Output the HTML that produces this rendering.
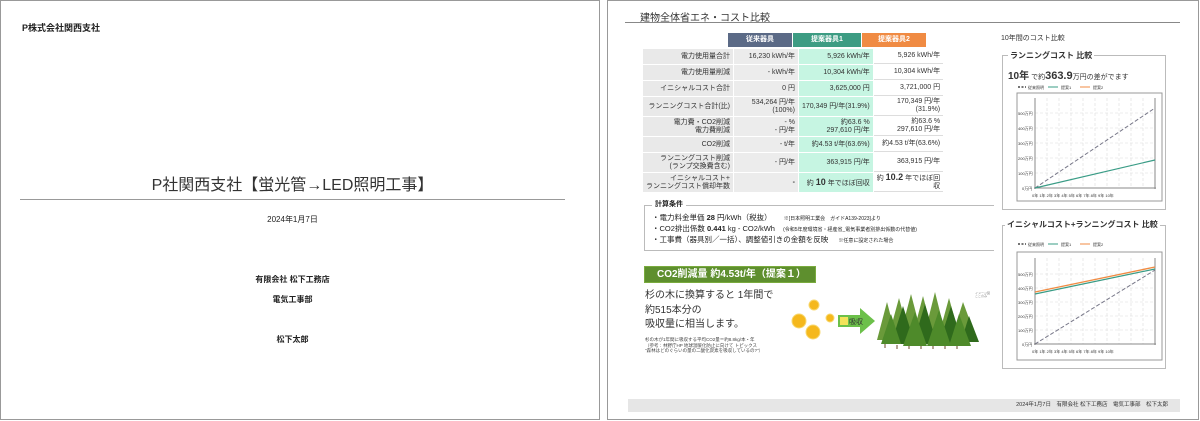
<!DOCTYPE html>
<html><head><meta charset="utf-8"><style>
*{margin:0;padding:0;box-sizing:border-box}
body{width:1200px;height:421px;background:#fff;position:relative;overflow:hidden;font-family:"Liberation Sans","Noto Sans CJK JP",sans-serif;color:#222}
.a{position:absolute;white-space:nowrap}
.c{text-align:center}
table{border-collapse:separate;border-spacing:1px;font-size:7px;color:#333}
td{height:15px;padding:0 3px;text-align:right;line-height:8px}
td.l{background:#e9e9e9;width:85px}
td.g{background:#ececec;width:64px}
td.t{background:#c6f5e2;width:68px}
td.o{background:#fff;width:65px;border-bottom:1px solid #ddd}
</style></head><body>
<!-- left slide -->
<div class="a" style="left:0;top:0;width:600px;height:420px;border:1px solid #999"></div>
<div class="a" style="left:22px;top:21px;font-size:9px;font-weight:bold">P株式会社関西支社</div>
<div class="a c" style="left:0;width:585px;top:171px;font-size:16px;color:#333">P社関西支社【蛍光管→LED照明工事】</div>
<div class="a" style="left:20px;top:199px;width:545px;height:1px;background:#999"></div>
<div class="a c" style="left:0;width:585px;top:214px;font-size:8px">2024年1月7日</div>
<div class="a c" style="left:0;width:585px;top:274px;font-size:8px;font-weight:bold">有限会社 松下工務店</div>
<div class="a c" style="left:0;width:585px;top:294px;font-size:8px;font-weight:bold">電気工事部</div>
<div class="a c" style="left:0;width:585px;top:334px;font-size:8px;font-weight:bold">松下太郎</div>

<!-- right slide -->
<div class="a" style="left:607px;top:0;width:592px;height:420px;border:1px solid #999"></div>
<div class="a" style="left:640px;top:9px;font-size:10px;color:#333">建物全体省エネ・コスト比較</div>
<div class="a" style="left:625px;top:22px;width:555px;height:1px;background:#888"></div>
<div class="a" style="left:728px;top:33px;width:64px;height:14px;background:#5b6a86;color:#fff;font-size:7px;font-weight:bold;text-align:center;line-height:14px">従来器具</div>
<div class="a" style="left:793px;top:33px;width:68px;height:14px;background:#3d9c83;color:#fff;font-size:7px;font-weight:bold;text-align:center;line-height:14px">提案器具1</div>
<div class="a" style="left:862px;top:33px;width:64px;height:14px;background:#f08b43;color:#fff;font-size:7px;font-weight:bold;text-align:center;line-height:14px">提案器具2</div>
<table class="a" style="left:642px;top:48px">
<tr><td class="l">電力使用量合計</td><td class="g">16,230 kWh/年</td><td class="t">5,926 kWh/年</td><td class="o">5,926 kWh/年</td></tr>
<tr><td class="l">電力使用量削減</td><td class="g">- kWh/年</td><td class="t">10,304 kWh/年</td><td class="o">10,304 kWh/年</td></tr>
<tr><td class="l">イニシャルコスト合計</td><td class="g">0 円</td><td class="t">3,625,000 円</td><td class="o">3,721,000 円</td></tr>
<tr><td class="l" style="height:19px">ランニングコスト合計(比)</td><td class="g">534,264 円/年<br>(100%)</td><td class="t">170,349 円/年(31.9%)</td><td class="o">170,349 円/年<br>(31.9%)</td></tr>
<tr><td class="l" style="height:19px">電力費・CO2削減<br>電力費削減</td><td class="g">- %<br>- 円/年</td><td class="t">約63.6 %<br>297,610 円/年</td><td class="o">約63.6 %<br>297,610 円/年</td></tr>
<tr><td class="l">CO2削減</td><td class="g">- t/年</td><td class="t">約4.53 t/年(63.6%)</td><td class="o">約4.53 t/年(63.6%)</td></tr>
<tr><td class="l" style="height:19px">ランニングコスト削減<br>(ランプ交換費含む)</td><td class="g">- 円/年</td><td class="t">363,915 円/年</td><td class="o">363,915 円/年</td></tr>
<tr><td class="l" style="height:19px">イニシャルコスト+<br>ランニングコスト償却年数</td><td class="g" style="font-weight:bold">-</td><td class="t">約 <b style="font-size:9px">10</b> 年でほぼ回収</td><td class="o">約 <b style="font-size:9px">10.2</b> 年でほぼ回<br>収</td></tr>
</table>

<div class="a" style="left:644px;top:205px;width:350px;height:46px;border:1px solid #bbb;border-right:none"></div>
<div class="a" style="left:652px;top:199px;font-size:7px;font-weight:bold;background:#fff;padding:0 3px">計算条件</div>
<div class="a" style="left:652px;top:212px;font-size:7.5px">・電力料金単価 <b>28</b> 円/kWh（税抜） <span style="font-size:5px;margin-left:10px">※[日本照明工業会　ガイドA139-2023]より</span></div>
<div class="a" style="left:652px;top:223px;font-size:7.5px">・CO2排出係数 <b>0.441</b> kg - CO2/kWh <span style="font-size:5px;margin-left:6px">(令和5年度環境省・経産省_電気事業者別排出係数の代替値)</span></div>
<div class="a" style="left:652px;top:234px;font-size:7.5px">・工事費（器具別／一括）、調整値引きの金額を反映 <span style="font-size:5px;margin-left:8px">※任意に設定された場合</span></div>

<div class="a" style="left:644px;top:266px;width:172px;height:17px;background:#5e8f2e;border:1px solid #7aab3e;color:#fff;font-size:10px;font-weight:bold;line-height:15px;padding-left:12px">CO2削減量 約4.53t/年（提案１）</div>
<div class="a" style="left:645px;top:289px;font-size:10px;color:#333;line-height:14.5px">杉の木に換算すると 1年間で<br>約515本分の<br>吸収量に相当します。</div>
<div class="a" style="left:645px;top:337px;font-size:4.5px;color:#444;line-height:5.5px">杉の木が1年間に吸収する平均CO2量＝約8.8kg/本・年<br>（参考：林野庁HP 地球温暖化防止に向けて トピックス<br>"森林はどのぐらいの量の二酸化炭素を吸収しているの?"）</div>
<svg class="a" style="left:785px;top:290px" width="200" height="60">
<g fill="#f5b81c" stroke="#f8d870" stroke-width="1"><circle cx="29" cy="15" r="5"/><circle cx="45" cy="28" r="4"/><circle cx="14" cy="31" r="7"/><circle cx="28" cy="42" r="7"/></g>
<polygon points="53,25 75,25 75,18 90,31 75,44 75,37 53,37" fill="#6cc04a"/>
<rect x="55" y="27" width="8" height="8" fill="#f3e35a"/>
<text x="64" y="34" font-size="7" fill="#333">吸収</text>
<g fill="#6a9a3a">
<polygon points="92,50 102,12 112,50"/><polygon points="102,52 114,8 126,52"/><polygon points="114,50 126,4 138,50"/><polygon points="126,52 138,6 150,52"/><polygon points="138,50 150,2 162,50"/><polygon points="152,52 164,8 176,52"/><polygon points="166,50 178,12 192,50"/>
</g>
<g fill="#2f6a1c"><polygon points="106,54 118,16 130,54"/><polygon points="128,54 140,14 152,54"/><polygon points="154,54 166,16 178,54"/><polygon points="176,52 184,26 194,52"/></g>
<g fill="#4e8a2a"><polygon points="96,54 106,24 116,54"/><polygon points="118,56 130,22 142,56"/><polygon points="142,56 154,20 166,56"/><polygon points="164,56 174,24 186,56"/></g>
<g stroke="#6a4a2a" stroke-width="1"><line x1="100" y1="54" x2="100" y2="58"/><line x1="112" y1="55" x2="112" y2="59"/><line x1="124" y1="56" x2="124" y2="59"/><line x1="136" y1="56" x2="136" y2="59"/><line x1="148" y1="56" x2="148" y2="59"/><line x1="160" y1="56" x2="160" y2="59"/><line x1="172" y1="56" x2="172" y2="59"/></g>
</svg>
<div class="a" style="left:975px;top:292px;font-size:3px;color:#888;line-height:3px">イメージ図<br>ここのみ</div>

<div class="a" style="left:628px;top:399px;width:552px;height:13px;background:#e6e6e6;font-size:5.5px;text-align:right;padding-right:12px;line-height:13px;color:#333">2024年1月7日　有限会社 松下工務店　電気工事部　松下太郎</div>

<!-- charts -->
<div class="a" style="left:1001px;top:33px;font-size:7px;color:#333">10年間のコスト比較</div>
<div class="a" style="left:1002px;top:55px;width:164px;height:155px;border:1px solid #bbb"></div>
<div class="a" style="left:1008px;top:50px;font-size:8px;font-weight:bold;background:#fff;padding:0 2px;color:#333">ランニングコスト 比較</div>
<div class="a" style="left:1008px;top:67px;font-size:7px;color:#333"><b style="font-size:10px">10年</b> で約<b style="font-size:11px">363.9</b>万円の差がでます</div>
<div class="a" style="left:1002px;top:225px;width:164px;height:144px;border:1px solid #bbb"></div>
<div class="a" style="left:1005px;top:219px;font-size:8px;font-weight:bold;background:#fff;padding:0 2px;color:#333">イニシャルコスト+ランニングコスト 比較</div>

<svg class="a" style="left:1010px;top:83px" width="155" height="122" font-size="4" fill="#333">
<line x1="8" y1="4" x2="16" y2="4" stroke="#222" stroke-width="1.2" stroke-dasharray="2,1.5"/><text x="18" y="6">従来照明</text>
<line x1="38" y1="4" x2="48" y2="4" stroke="#3a9c86"/><text x="51" y="6">提案1</text>
<line x1="70" y1="4" x2="80" y2="4" stroke="#f08b43"/><text x="83" y="6">提案2</text>
<rect x="7" y="10" width="145" height="108" fill="#fff" stroke="#999"/>
<g stroke="#ddd" stroke-dasharray="3,2" stroke-width=".6">
<line x1="25" y1="30" x2="145" y2="30"/><line x1="25" y1="45" x2="145" y2="45"/><line x1="25" y1="60" x2="145" y2="60"/><line x1="25" y1="75" x2="145" y2="75"/><line x1="25" y1="90" x2="145" y2="90"/>
<line x1="37" y1="15" x2="37" y2="105"/><line x1="49" y1="15" x2="49" y2="105"/><line x1="61" y1="15" x2="61" y2="105"/><line x1="73" y1="15" x2="73" y2="105"/><line x1="85" y1="15" x2="85" y2="105"/><line x1="97" y1="15" x2="97" y2="105"/><line x1="109" y1="15" x2="109" y2="105"/><line x1="121" y1="15" x2="121" y2="105"/><line x1="133" y1="15" x2="133" y2="105"/></g>
<line x1="25" y1="15" x2="25" y2="106" stroke="#888"/><line x1="145" y1="15" x2="145" y2="106" stroke="#888"/><line x1="24" y1="105" x2="146" y2="105" stroke="#888"/>
<line x1="25" y1="105" x2="145" y2="25" stroke="#778" stroke-dasharray="4,2"/>
<line x1="25" y1="105" x2="145" y2="77" stroke="#3a9c86" stroke-width="1.2"/>
<text x="8" y="32">500万円</text><text x="8" y="47">400万円</text><text x="8" y="62">300万円</text><text x="8" y="77">200万円</text><text x="8" y="92">100万円</text><text x="12" y="107">0万円</text>
<text x="22" y="114">0年 1年 2年 3年 4年 5年 6年 7年 8年 9年 10年</text>
</svg>

<svg class="a" style="left:1010px;top:240px" width="155" height="125" font-size="4" fill="#333">
<line x1="8" y1="4" x2="16" y2="4" stroke="#222" stroke-width="1.2" stroke-dasharray="2,1.5"/><text x="18" y="6">従来照明</text>
<line x1="38" y1="4" x2="48" y2="4" stroke="#3a9c86"/><text x="51" y="6">提案1</text>
<line x1="70" y1="4" x2="80" y2="4" stroke="#f08b43"/><text x="83" y="6">提案2</text>
<rect x="7" y="12" width="145" height="108" fill="#fff" stroke="#999"/>
<g stroke="#ddd" stroke-dasharray="3,2" stroke-width=".6">
<line x1="25" y1="34" x2="145" y2="34"/><line x1="25" y1="48" x2="145" y2="48"/><line x1="25" y1="62" x2="145" y2="62"/><line x1="25" y1="76" x2="145" y2="76"/><line x1="25" y1="90" x2="145" y2="90"/>
<line x1="37" y1="18" x2="37" y2="104"/><line x1="49" y1="18" x2="49" y2="104"/><line x1="61" y1="18" x2="61" y2="104"/><line x1="73" y1="18" x2="73" y2="104"/><line x1="85" y1="18" x2="85" y2="104"/><line x1="97" y1="18" x2="97" y2="104"/><line x1="109" y1="18" x2="109" y2="104"/><line x1="121" y1="18" x2="121" y2="104"/><line x1="133" y1="18" x2="133" y2="104"/></g>
<line x1="25" y1="18" x2="25" y2="105" stroke="#888"/><line x1="145" y1="18" x2="145" y2="105" stroke="#888"/><line x1="24" y1="104" x2="146" y2="104" stroke="#888"/>
<line x1="25" y1="104" x2="145" y2="30" stroke="#778" stroke-dasharray="4,2"/>
<line x1="25" y1="52" x2="145" y2="27" stroke="#f08b43" stroke-width="1.4"/>
<line x1="25" y1="54" x2="145" y2="29" stroke="#3a9c86" stroke-width="1.2"/>
<text x="8" y="36">500万円</text><text x="8" y="50">400万円</text><text x="8" y="64">300万円</text><text x="8" y="78">200万円</text><text x="8" y="92">100万円</text><text x="12" y="106">0万円</text>
<text x="22" y="113">0年 1年 2年 3年 4年 5年 6年 7年 8年 9年 10年</text>
</svg>
</body></html>
